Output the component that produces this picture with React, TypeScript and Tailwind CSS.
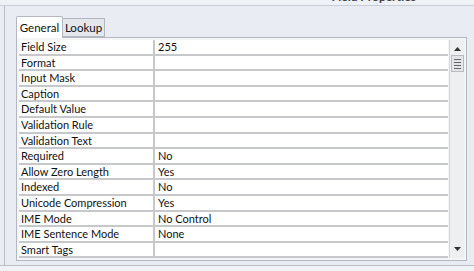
const rows: [string, string][] = [
  ["Field Size", "255"],
  ["Format", ""],
  ["Input Mask", ""],
  ["Caption", ""],
  ["Default Value", ""],
  ["Validation Rule", ""],
  ["Validation Text", ""],
  ["Required", "No"],
  ["Allow Zero Length", "Yes"],
  ["Indexed", "No"],
  ["Unicode Compression", "Yes"],
  ["IME Mode", "No Control"],
  ["IME Sentence Mode", "None"],
  ["Smart Tags", ""],
]

export default function App() {
  return (
    <div
      className="w-[474px] h-[271px] overflow-hidden bg-[#e9edf3] flex flex-col text-[11px] text-[#111]"
      style={{ fontFamily: 'Lato, "Noto Sans", sans-serif' }}
    >
      <div className="h-[6px] border-b border-[#c9ced6] bg-[#eef1f6] flex justify-end pr-[58px]">
        <span className="text-[12px] leading-none -mt-[9px] text-[#444] font-bold">Field Properties</span>
      </div>
      <div className="flex-1 flex ml-[4px] border-l border-[#b9bec6]">
        <div className="flex-1 flex flex-col pl-[11px] pt-[9px] pr-[8px]">
          <div className="flex items-end h-[22px]">
            <div className="h-[22px] w-[47px] border border-b-0 border-[#b3b8c0] bg-white flex items-center justify-center rounded-t-[2px] -mb-px z-10 text-[11.5px]">
              General
            </div>
            <div className="h-[19px] w-[42px] border border-l-0 border-[#b3b8c0] bg-[#e4e7ec] flex items-center justify-center text-[11.5px]">
              Lookup
            </div>
          </div>
          <div className="flex border border-[#b3b8c0] bg-[#f4f5f7] w-[451px] p-[2px] pl-[2px]">
            <div className="flex-1 flex flex-col bg-white">
              {rows.map(([k, v]) => (
                <div key={k} className="flex h-[15.6px] border-b-2 border-[#c6c8cb]">
                  <div className="w-[136px] pl-[2px] leading-[13px] border-r-2 border-[#c6c8cb] whitespace-nowrap">{k}</div>
                  <div className="flex-1 pl-[3px] leading-[13px]">{v}</div>
                </div>
              ))}
            </div>
            <div className="w-[15px] ml-[1px] bg-[#eeeff1] border-l border-[#d4d6d9] flex flex-col items-center">
              <svg width="9" height="6" viewBox="0 0 9 6" className="mt-[6px]">
                <path d="M1 5 L4.5 1 L8 5 Z" fill="#333" />
              </svg>
              <div className="mt-[3px] w-[13px] h-[17px] border border-[#b8bbc0] bg-[#e2e4e8] flex flex-col items-center justify-center gap-[2px]">
                <div className="w-[7px] h-px bg-[#666]" />
                <div className="w-[7px] h-px bg-[#666]" />
                <div className="w-[7px] h-px bg-[#666]" />
                <div className="w-[7px] h-px bg-[#666]" />
              </div>
              <div className="flex-1" />
              <svg width="9" height="6" viewBox="0 0 9 6" className="mb-[6px]">
                <path d="M1 1 L8 1 L4.5 5 Z" fill="#333" />
              </svg>
            </div>
          </div>
          <div className="flex-1" />
        </div>
      </div>
      <div className="h-[6px] border-t border-[#b9bec6] bg-[#f0f2f6]" />
    </div>
  )
}
